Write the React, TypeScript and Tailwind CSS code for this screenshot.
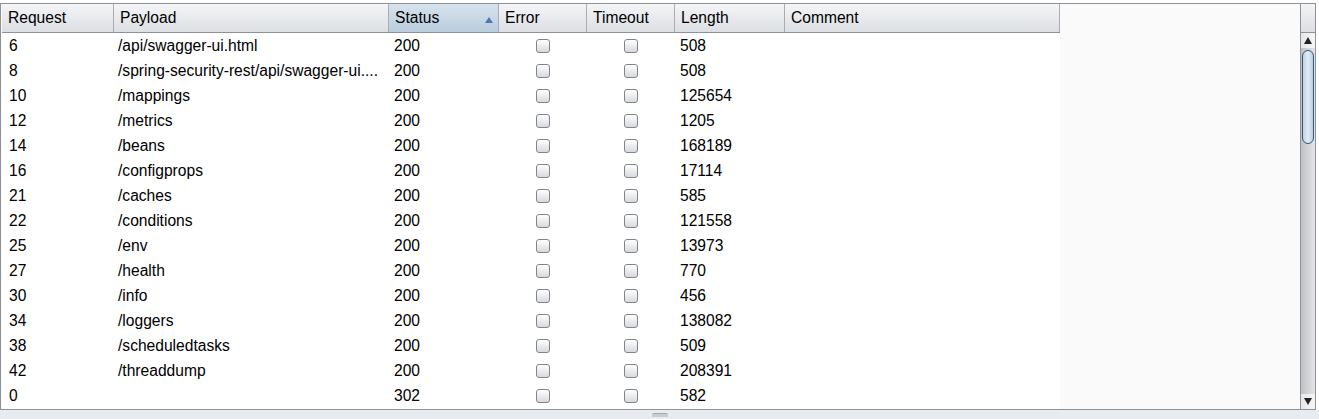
import React from 'react';

interface ResultRow {
	request: number;
	payload: string;
	status: number;
	length: number;
}

const rows: ResultRow[] = [
	{ request: 6, payload: '/api/swagger-ui.html', status: 200, length: 508 },
	{ request: 8, payload: '/spring-security-rest/api/swagger-ui....', status: 200, length: 508 },
	{ request: 10, payload: '/mappings', status: 200, length: 125654 },
	{ request: 12, payload: '/metrics', status: 200, length: 1205 },
	{ request: 14, payload: '/beans', status: 200, length: 168189 },
	{ request: 16, payload: '/configprops', status: 200, length: 17114 },
	{ request: 21, payload: '/caches', status: 200, length: 585 },
	{ request: 22, payload: '/conditions', status: 200, length: 121558 },
	{ request: 25, payload: '/env', status: 200, length: 13973 },
	{ request: 27, payload: '/health', status: 200, length: 770 },
	{ request: 30, payload: '/info', status: 200, length: 456 },
	{ request: 34, payload: '/loggers', status: 200, length: 138082 },
	{ request: 38, payload: '/scheduledtasks', status: 200, length: 509 },
	{ request: 42, payload: '/threaddump', status: 200, length: 208391 },
	{ request: 0, payload: '', status: 302, length: 582 },
];

const cols = 'grid grid-cols-[112px_275px_110px_88px_88px_110px_275px]';

function Checkbox() {
	return (
		<span className="block w-[14px] h-[14px] rounded-[3px] border border-[#80858c] bg-linear-to-b from-white to-[#d7d9dd]" />
	);
}

function HeaderCell({
	label,
	sorted = false,
}: {
	label: string;
	sorted?: boolean;
}) {
	return (
		<div
			className={
				sorted
					? 'relative flex items-center pl-[6px] border-r border-[#a9acb1] bg-linear-to-b from-[#d7e3ee] to-[#b9cddd]'
					: 'flex items-center pl-[6px] border-r border-[#a9acb1]'
			}
		>
			{label}
			{sorted && (
				<span className="absolute right-[5px] top-[13px] w-0 h-0 border-x-[4px] border-x-transparent border-b-[6px] border-b-[#4d78ad]" />
			)}
		</div>
	);
}

function Scrollbar() {
	return (
		<div className="flex flex-col w-[15px] border-l border-[#8e9197]">
			<div className="h-[29px] border-b border-[#8e9197] bg-linear-to-b from-[#f3f4f6] to-[#dcdee2]" />
			<div className="flex-1 flex flex-col bg-linear-to-r from-[#bfc1c5] to-[#e4e5e8]">
				<div className="h-[15px] flex items-center justify-center bg-linear-to-r from-[#e6e7ea] to-[#f6f6f7]">
					<span className="w-0 h-0 border-x-[4px] border-x-transparent border-b-[7px] border-b-[#222]" />
				</div>
				<div className="mt-[2px] mx-px h-[94px] rounded-[7px] border border-[#3b5573] bg-linear-to-r from-[#bcd2e5] via-[#e2edf6] to-[#b8cfe2]" />
				<div className="flex-1" />
				<div className="h-[15px] flex items-center justify-center bg-linear-to-r from-[#e6e7ea] to-[#f6f6f7]">
					<span className="w-0 h-0 border-x-[4px] border-x-transparent border-t-[7px] border-t-[#222]" />
				</div>
			</div>
		</div>
	);
}

export default function App() {
	return (
		<div className="w-[1319px] h-[419px] bg-white pt-[3px] font-['Liberation_Sans',Arial,sans-serif] text-[15.6px] text-black overflow-hidden">
			<div className="flex w-[1316px] h-[407px] border border-[#8e9197]">
				<div className="flex-1 flex flex-col bg-[#fafafa] pl-px">
					<div className="flex h-[29px]">
						<div className={`${cols} border-b border-[#8e9197] bg-linear-to-b from-[#f4f5f7] to-[#dcdfe3]`}>
							<HeaderCell label="Request" />
							<HeaderCell label="Payload" />
							<HeaderCell label="Status" sorted />
							<HeaderCell label="Error" />
							<HeaderCell label="Timeout" />
							<HeaderCell label="Length" />
							<HeaderCell label="Comment" />
						</div>
					</div>
					<div className="flex-1 flex flex-col">
						<div className="w-[1058px] bg-white h-full">
							{rows.map((row, index) => (
								<div className={`${cols} h-[25px] items-center`} key={index}>
									<div className="pl-[7px]">{row.request}</div>
									<div className="pl-[4px] whitespace-nowrap overflow-hidden">{row.payload}</div>
									<div className="pl-[5px]">{row.status}</div>
									<div className="flex justify-center">
										<Checkbox />
									</div>
									<div className="flex justify-center">
										<Checkbox />
									</div>
									<div className="pl-[5px]">{row.length}</div>
									<div />
								</div>
							))}
						</div>
					</div>
				</div>
				<Scrollbar />
			</div>
			<div className="flex justify-center h-[10px] bg-[#e8ebef]">
				<span className="mt-[3px] w-[16px] h-[4px] rounded-t-[2px] bg-[#c9ccd1] border-t border-[#a3a7ad]" />
			</div>
		</div>
	);
}
